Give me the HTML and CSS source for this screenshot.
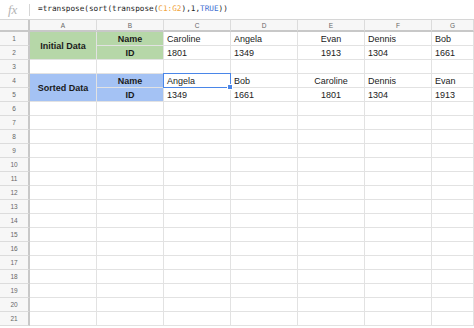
FILE: index.html
```html
<!DOCTYPE html>
<html>
<head>
<meta charset="utf-8">
<link rel="stylesheet" href="styles.css">
</head>
<body>
<div class="formula-bar">
  <span class="fx">fx</span>
  <span class="sep"></span>
  <span class="formula">=transpose(sort(transpose(<span class="ref">C1:G2</span>),<span class="num">1</span>,<span class="bool">TRUE</span>))</span>
</div>
<div class="sheet">
  <div class="corner"></div><div class="ch">A</div><div class="ch">B</div><div class="ch">C</div><div class="ch">D</div><div class="ch">E</div><div class="ch">F</div><div class="ch">G</div>

  <div class="rh">1</div><div class="c green bold center span2">Initial Data</div><div class="c green bold center">Name</div><div class="c">Caroline</div><div class="c">Angela</div><div class="c center">Evan</div><div class="c">Dennis</div><div class="c">Bob</div>
  <div class="rh">2</div><div class="c green bold center">ID</div><div class="c">1801</div><div class="c">1349</div><div class="c center">1913</div><div class="c">1304</div><div class="c">1661</div>
  <div class="rh">3</div><div class="c"></div><div class="c"></div><div class="c"></div><div class="c"></div><div class="c"></div><div class="c"></div><div class="c"></div>
  <div class="rh">4</div><div class="c blue bold center span2">Sorted Data</div><div class="c blue bold center">Name</div><div class="c selected">Angela<span class="handle"></span></div><div class="c">Bob</div><div class="c center">Caroline</div><div class="c">Dennis</div><div class="c">Evan</div>
  <div class="rh">5</div><div class="c blue bold center">ID</div><div class="c">1349</div><div class="c">1661</div><div class="c center">1801</div><div class="c">1304</div><div class="c">1913</div>

  <div class="rh">6</div><div class="c"></div><div class="c"></div><div class="c"></div><div class="c"></div><div class="c"></div><div class="c"></div><div class="c"></div>
  <div class="rh">7</div><div class="c"></div><div class="c"></div><div class="c"></div><div class="c"></div><div class="c"></div><div class="c"></div><div class="c"></div>
  <div class="rh">8</div><div class="c"></div><div class="c"></div><div class="c"></div><div class="c"></div><div class="c"></div><div class="c"></div><div class="c"></div>
  <div class="rh">9</div><div class="c"></div><div class="c"></div><div class="c"></div><div class="c"></div><div class="c"></div><div class="c"></div><div class="c"></div>
  <div class="rh">10</div><div class="c"></div><div class="c"></div><div class="c"></div><div class="c"></div><div class="c"></div><div class="c"></div><div class="c"></div>
  <div class="rh">11</div><div class="c"></div><div class="c"></div><div class="c"></div><div class="c"></div><div class="c"></div><div class="c"></div><div class="c"></div>
  <div class="rh">12</div><div class="c"></div><div class="c"></div><div class="c"></div><div class="c"></div><div class="c"></div><div class="c"></div><div class="c"></div>
  <div class="rh">13</div><div class="c"></div><div class="c"></div><div class="c"></div><div class="c"></div><div class="c"></div><div class="c"></div><div class="c"></div>
  <div class="rh">14</div><div class="c"></div><div class="c"></div><div class="c"></div><div class="c"></div><div class="c"></div><div class="c"></div><div class="c"></div>
  <div class="rh">15</div><div class="c"></div><div class="c"></div><div class="c"></div><div class="c"></div><div class="c"></div><div class="c"></div><div class="c"></div>
  <div class="rh">16</div><div class="c"></div><div class="c"></div><div class="c"></div><div class="c"></div><div class="c"></div><div class="c"></div><div class="c"></div>
  <div class="rh">17</div><div class="c"></div><div class="c"></div><div class="c"></div><div class="c"></div><div class="c"></div><div class="c"></div><div class="c"></div>
  <div class="rh">18</div><div class="c"></div><div class="c"></div><div class="c"></div><div class="c"></div><div class="c"></div><div class="c"></div><div class="c"></div>
  <div class="rh">19</div><div class="c"></div><div class="c"></div><div class="c"></div><div class="c"></div><div class="c"></div><div class="c"></div><div class="c"></div>
  <div class="rh">20</div><div class="c"></div><div class="c"></div><div class="c"></div><div class="c"></div><div class="c"></div><div class="c"></div><div class="c"></div>
  <div class="rh">21</div><div class="c"></div><div class="c"></div><div class="c"></div><div class="c"></div><div class="c"></div><div class="c"></div><div class="c"></div>
</div>
</body>
</html>
```
FILE: styles.css
```css
html, body {
  margin: 0;
  padding: 0;
  background: #ffffff;
  overflow: hidden;
  width: 474px;
  height: 328px;
}
body {
  font-family: "Liberation Sans", Arial, sans-serif;
  color: #222222;
}
.formula-bar {
  height: 19px;
  border-bottom: 1px solid #d6d6d6;
  display: flex;
  align-items: center;
  box-sizing: content-box;
}
.fx {
  font-family: "Liberation Serif", serif;
  font-style: italic;
  font-size: 13px;
  color: #b4b4b4;
  width: 12px;
  margin-left: 8px;
  line-height: 1;
}
.sep {
  width: 1px;
  height: 12px;
  background: #d6d6d6;
  margin-left: 9px;
  margin-right: 8px;
}
.formula {
  font-family: "DejaVu Sans Mono", "Liberation Mono", monospace;
  font-size: 7.7px;
  color: #1e1e1e;
  white-space: nowrap;
  position: relative;
  top: -1px;
}
.ref { color: #f1a33a; }
.num { color: #1e1e1e; }
.bool { color: #3d6fd2; }

.sheet {
  display: grid;
  grid-template-columns: 30px repeat(6, 67px) 42px;
  grid-template-rows: 12px repeat(21, 14px);
  width: 474px;
}
.corner, .ch, .rh {
  background: #f7f7f7;
  color: #666666;
  font-size: 6.5px;
  display: flex;
  align-items: center;
  justify-content: center;
  box-sizing: border-box;
}
.corner {
  border-right: 2px solid #c8c8c8;
  border-bottom: 2px solid #c8c8c8;
}
.ch {
  border-right: 1px solid #dcdcdc;
  border-bottom: 2px solid #c8c8c8;
  padding-top: 1px;
}
.rh {
  border-right: 2px solid #c8c8c8;
  border-bottom: 1px solid #dcdcdc;
}
.c {
  box-sizing: border-box;
  border-right: 1px solid #e2e2e2;
  border-bottom: 1px solid #e2e2e2;
  font-size: 9px;
  color: #222222;
  padding: 0 3px;
  display: flex;
  align-items: center;
  white-space: nowrap;
  overflow: hidden;
  position: relative;
}
.center { justify-content: center; }
.bold { font-weight: bold; color: #1a1a1a; }
.span2 { grid-row: span 2; }
.green { background: #b6d7a8; }
.blue { background: #a4c2f4; }
.selected { overflow: visible; }
.selected::after {
  content: "";
  position: absolute;
  left: -1px;
  top: -1px;
  right: -1px;
  bottom: -1px;
  border: 1.5px solid #4a86e8;
  pointer-events: none;
}
.handle {
  position: absolute;
  right: -3px;
  bottom: -3px;
  width: 4px;
  height: 4px;
  background: #4a86e8;
  border: 1px solid #ffffff;
  z-index: 2;
}
```
